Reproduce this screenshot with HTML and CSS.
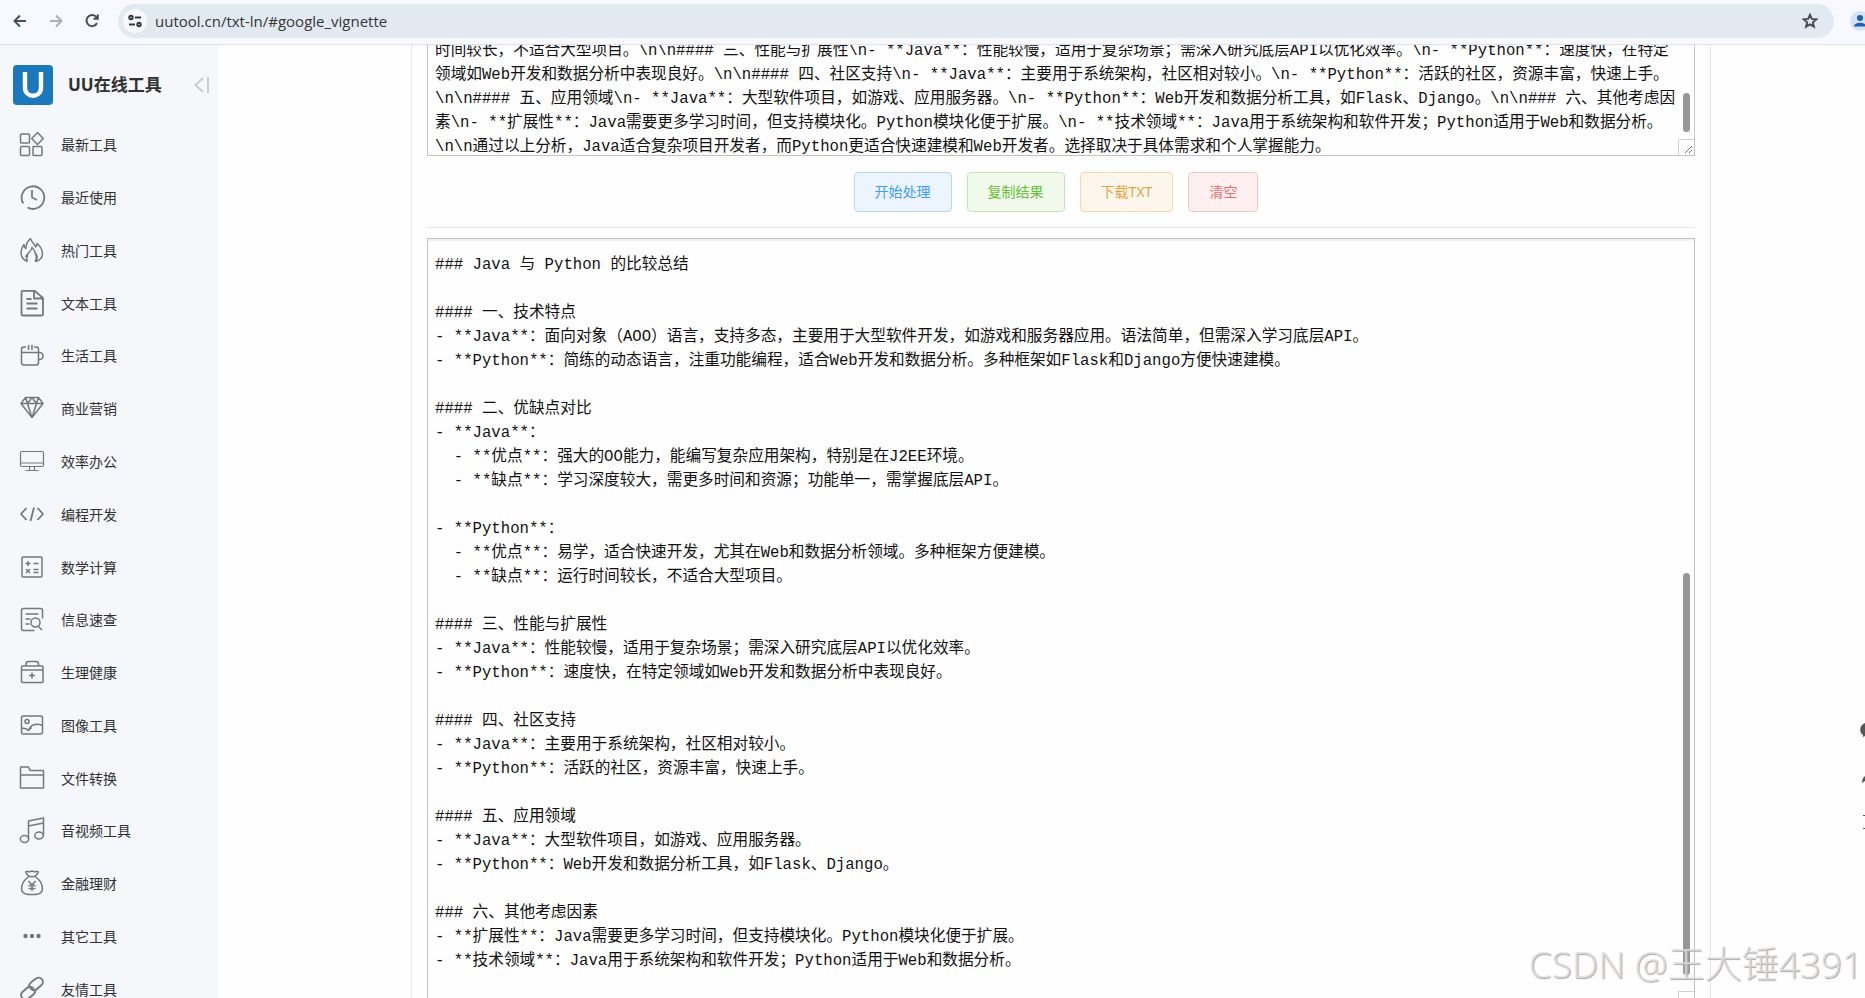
FILE: index.html
```html
<!DOCTYPE html>
<html lang="zh-CN">
<head>
<meta charset="utf-8">
<title>UU在线工具</title>
<link rel="stylesheet" href="styles.css">
</head>
<body>
<header class="browser">
  <button class="nav-btn" aria-label="后退"><svg width="16" height="16" viewBox="0 0 16 16"><path d="M14 8H3M8 2.500L2.500 8L8 13.500"/></svg></button>
  <button class="nav-btn dim" aria-label="前进"><svg width="16" height="16" viewBox="0 0 16 16"><path d="M2 8h11M8 2.500L13.500 8L8 13.500"/></svg></button>
  <button class="nav-btn" aria-label="刷新"><svg width="16" height="16" viewBox="0 0 16 16"><path d="M13 10a5.500 5.500 0 1 1-1-6.200L13.500 5.300M13.800 1.500v4.300h-4.300"/></svg></button>
  <div class="address">
    <button class="site-info" aria-label="网站信息"><svg width="14" height="14" viewBox="0 0 14 14"><circle cx="3" cy="3.500" r="1.700"/><path d="M7 3.500h6M1 10.500h6"/><circle cx="11" cy="10.500" r="1.700"/></svg></button>
    <input class="url" type="text" aria-label="网址" value="uutool.cn/txt-ln/#google_vignette">
    <button class="star" aria-label="收藏"><svg width="16" height="16" viewBox="0 0 16 16"><path d="M8 1.800l1.800 4.100 4.500.4-3.400 3 1 4.400L8 11.400l-3.900 2.300 1-4.400-3.400-3 4.500-.4z"/></svg></button>
  </div>
  <button class="profile" aria-label="个人资料"><svg width="20" height="20" viewBox="0 0 20 20"><circle cx="10" cy="10" r="10" fill="#d3e3f8"/><circle cx="10" cy="7" r="3" fill="#1f5fb5"/><path d="M4 15.500c0-5 12-5 12 0z" fill="#1f5fb5"/></svg></button>
</header>
<div class="page">
  <aside class="sidebar">
    <div class="brand">
      <svg class="logo" width="40" height="40" viewBox="0 0 40 40"><rect width="40" height="40" rx="4" fill="#1b78bc"/><path d="M12 7v15.500c0 11 16 11 16 0V7" fill="none" stroke="#fff" stroke-width="4.400"/></svg>
      <strong class="brand-name">UU在线工具</strong>
      <button class="collapse" aria-label="收起"><svg width="16" height="18" viewBox="0 0 16 18"><path d="M9 2L1.500 9L9 16M14 1v16"/></svg></button>
    </div>
    <nav class="menu">
      <a href="#new"><svg viewBox="0 0 28 28"><rect x="2.500" y="4" width="9" height="9" rx="1"/><rect x="2.500" y="16.500" width="9" height="9" rx="1"/><rect x="15" y="16.500" width="9" height="9" rx="1"/><path d="M19.500 2.500l5.800 6-5.800 6-5.800-6z"/></svg>最新工具</a>
      <a href="#recent"><svg viewBox="0 0 28 28"><path d="M5.300 20.500A11.300 11.300 0 1 1 9.500 24.500M14 7v7.500l5 2.500" stroke-width="1.800"/></svg>最近使用</a>
      <a href="#hot"><svg viewBox="0 0 28 28"><path d="M9.500 25.500C1 22 2 14 6 8.500c0 2.500.5 3.500 2 4C8 8 9.500 5 12.500 2.500c.5 3.500 4.500 5 5 8.500 1-.5 1.500-2 1.500-3.500 7 6 8 15-1 18 2-4 1.500-6-.5-8-.5-2.500-1.500-4-3.500-6-.5 4-6 7-6.500 9.500"/><path d="M9.500 25c-1.500-2.500-1-4 .5-6M17 17c2 3 2 5.500 0 8.500"/></svg>热门工具</a>
      <a href="#text"><svg viewBox="0 0 28 28"><path d="M4.500 1.800h12L25 9v15.700q0 1.800-1.800 1.800H5.300q-1.800 0-1.800-1.800V3.300q0-1.500 1-1.500zM16 2v7.500h9M8.500 10h5M8.500 14.500h11M8.500 19.500h11" stroke-width="1.800"/></svg>文本工具</a>
      <a href="#life"><svg viewBox="0 0 28 28"><path d="M8 6H6Q3.500 6 3.500 8.500v13Q3.500 24 6 24h12q2.500 0 2.500-2.500v-13Q20.500 6 18 6h-2M3.500 11.500h17M10.500 4v5M14 4v5M20.500 11.500c6-1 6 8 0 7"/></svg>生活工具</a>
      <a href="#biz"><svg viewBox="0 0 28 28"><path d="M7.500 3.500h13l4.500 6L14 23.500 3 9.500zM3 9.500h22M7.500 3.500l2 6 4.500-6 4.500 6 2-6M9.500 9.500L14 23.500l4.500-14"/></svg>商业营销</a>
      <a href="#office"><svg viewBox="0 0 28 28"><path d="M4 4.500h20q1.500 0 1.500 1.500v12q0 1.500-1.500 1.500H4q-1.500 0-1.500-1.500V6Q2.500 4.500 4 4.500zM2.500 16h23M11.500 19.500v3.500M16.500 19.500v3.500M7.500 23.500h13" stroke-width="1.200"/></svg>效率办公</a>
      <a href="#dev"><svg viewBox="0 0 28 28"><path d="M8.500 8L3 14l5.500 6M19.500 8l5.500 6-5.500 6M16 7.500L12.500 21" stroke-width="1.800"/></svg>编程开发</a>
      <a href="#math"><svg viewBox="0 0 28 28"><rect x="4" y="4" width="20" height="20" rx="1"/><path d="M7.500 10.500h5M10 8v5M15.500 10.500h5M8 16l4 4M12 16l-4 4M15.500 16.500h5M15.500 19.500h5"/></svg>数学计算</a>
      <a href="#info"><svg viewBox="0 0 28 28"><path d="M16.500 25.500h-11q-2 0-2-2v-18q0-2 2-2h17q2 0 2 2v8M7.500 9h13M7.500 14h5M7.500 19h4M20.500 21.500l3.500 3.500"/><circle cx="17.500" cy="17.500" r="4.500"/></svg>信息速查</a>
      <a href="#health"><svg viewBox="0 0 28 28"><rect x="3.500" y="8" width="21.500" height="16.500" rx="1"/><path d="M3.500 12h21.500M8 8V6q0-2.500 2.500-2.500h7.500Q20.500 3.500 20.500 6v2M14 14.500v6M11 17.500h6" stroke-width="1.600"/></svg>生理健康</a>
      <a href="#image"><svg viewBox="0 0 28 28"><rect x="3.500" y="5" width="21" height="18" rx="2"/><circle cx="9" cy="10.500" r="2"/><path d="M3.500 17.500c3-.5 5.500.5 7 2 2-6 7.500-7.500 14-5M10.500 19.500l3-3"/></svg>图像工具</a>
      <a href="#file"><svg viewBox="0 0 28 28"><path d="M3 24q-.5 0-.5-.5v-20Q2.500 3 3 3h7.500l1.500 3.500h13q.5 0 .5.500v16.500q0 .5-.5.500zM2.500 11h23"/></svg>文件转换</a>
      <a href="#av"><svg viewBox="0 0 28 28"><ellipse cx="6.500" cy="23" rx="4.200" ry="3.500"/><ellipse cx="21" cy="19.500" rx="4.200" ry="3.500"/><path d="M10.500 23V5L25.500 2v17.500M10.500 10l15-3"/></svg>音视频工具</a>
      <a href="#finance"><svg viewBox="0 0 28 28"><path d="M11 7.500C1.500 14 1 25.500 10 25.500h8c9 0 8.500-11.500-1-18zM11 7.500L8 4q-1-2 1.500-1.500 2 .5 3 0 1.500-.8 3 0 1 .5 3 0Q21 2 20 4l-3 3.500M10.500 12l3.500 4 3.500-4M14 16v6M10.500 16.500h7M10.500 19.500h7"/></svg>金融理财</a>
      <a href="#other"><svg viewBox="0 0 28 28"><g fill="#777" stroke="none"><circle cx="7.500" cy="14" r="2.200"/><circle cx="14" cy="14" r="2.200"/><circle cx="20.500" cy="14" r="2.200"/></g></svg>其它工具</a>
      <a href="#links"><svg viewBox="0 0 28 28"><path d="M11 13c-2-4 4-7 7-9.500 5-3 9 3 5.500 6.500l-5 4.500c-3 2-6 0-6-2M17 14c2 4-3 7-7 9.500-5 3-9-3-5.500-6.500l5-4.500c3-2 6 0 6 2" stroke-width="1.800"/></svg>友情工具</a>
    </nav>
  </aside>
  <main class="main">
    <section class="panel">
      <div class="field source">
        <textarea class="code" aria-label="输入文本" spellcheck="false">
时间较长，不适合大型项目。\n\n#### 三、性能与扩展性\n- **Java**：性能较慢，适用于复杂场景；需深入研究底层API以优化效率。\n- **Python**：速度快，在特定
领域如Web开发和数据分析中表现良好。\n\n#### 四、社区支持\n- **Java**：主要用于系统架构，社区相对较小。\n- **Python**：活跃的社区，资源丰富，快速上手。
\n\n#### 五、应用领域\n- **Java**：大型软件项目，如游戏、应用服务器。\n- **Python**：Web开发和数据分析工具，如Flask、Django。\n\n### 六、其他考虑因
素\n- **扩展性**：Java需要更多学习时间，但支持模块化。Python模块化便于扩展。\n- **技术领域**：Java用于系统架构和软件开发；Python适用于Web和数据分析。
\n\n通过以上分析，Java适合复杂项目开发者，而Python更适合快速建模和Web开发者。选择取决于具体需求和个人掌握能力。</textarea>
        <span class="thumb"></span>
        <svg class="grip" width="16" height="16" viewBox="0 0 16 16"><path class="edge" d="M.5 16V.5H16"/><path d="M7 14l7-7M11 14l3-3"/></svg>
      </div>
      <div class="actions">
        <button class="btn blue">开始处理</button>
        <button class="btn green">复制结果</button>
        <button class="btn orange">下载TXT</button>
        <button class="btn red">清空</button>
      </div>
      <hr class="rule">
      <div class="field result">
        <textarea class="code" aria-label="处理结果" spellcheck="false">
### Java 与 Python 的比较总结

#### 一、技术特点
- **Java**：面向对象（AOO）语言，支持多态，主要用于大型软件开发，如游戏和服务器应用。语法简单，但需深入学习底层API。
- **Python**：简练的动态语言，注重功能编程，适合Web开发和数据分析。多种框架如Flask和Django方便快速建模。

#### 二、优缺点对比
- **Java**：
  - **优点**：强大的OO能力，能编写复杂应用架构，特别是在J2EE环境。
  - **缺点**：学习深度较大，需更多时间和资源；功能单一，需掌握底层API。

- **Python**：
  - **优点**：易学，适合快速开发，尤其在Web和数据分析领域。多种框架方便建模。
  - **缺点**：运行时间较长，不适合大型项目。

#### 三、性能与扩展性
- **Java**：性能较慢，适用于复杂场景；需深入研究底层API以优化效率。
- **Python**：速度快，在特定领域如Web开发和数据分析中表现良好。

#### 四、社区支持
- **Java**：主要用于系统架构，社区相对较小。
- **Python**：活跃的社区，资源丰富，快速上手。

#### 五、应用领域
- **Java**：大型软件项目，如游戏、应用服务器。
- **Python**：Web开发和数据分析工具，如Flask、Django。

### 六、其他考虑因素
- **扩展性**：Java需要更多学习时间，但支持模块化。Python模块化便于扩展。
- **技术领域**：Java用于系统架构和软件开发；Python适用于Web和数据分析。
</textarea>
        <span class="thumb"></span>
        <svg class="grip" width="16" height="16" viewBox="0 0 16 16"><path class="edge" d="M.5 16V.5H16"/><path d="M7 14l7-7M11 14l3-3"/></svg>
      </div>
    </section>
  </main>
</div>
<svg class="float-tools" width="6" height="112" viewBox="0 0 6 112"><path d="M6 1C0 3 0 11 4 13v2l2-1zM6 54q-3 2-3 7l3-2zM4 93h2v1H4zM4 106h2v1H4z" fill="#555"/></svg>
<div class="watermark">CSDN @王大锤4391</div>
</body>
</html>
```
FILE: styles.css
```css
* { box-sizing: border-box; }
body {
  margin: 0;
  height: 100vh;
  display: flex;
  flex-direction: column;
  overflow: hidden;
  background: #fefefe;
  color: #333;
  font: 14px/20px "Noto Sans", "Noto Sans CJK SC", sans-serif;
}
button { font: inherit; cursor: pointer; }
svg { fill: none; flex: none; display: block; }

.browser {
  display: flex;
  align-items: center;
  height: 45px;
  padding: 0 0 3px 12px;
  background: #f8f9fe;
  border-bottom: 1px solid #dde1ea;
  overflow: hidden;
}
.nav-btn, .site-info, .star, .profile, .collapse {
  border: 0;
  padding: 0;
  background: none;
}
.nav-btn { width: 16px; margin-right: 20px; flex: none; }
.nav-btn svg { stroke: #46505c; stroke-width: 2; }
.nav-btn.dim svg { stroke: #a9adb5; }
.address {
  flex: 1;
  display: flex;
  align-items: center;
  height: 34px;
  margin: 0 16px 0 -2px;
  padding: 0 16px 0 5px;
  border-radius: 17px;
  background: #e3e9f1;
}
.site-info {
  display: grid;
  place-items: center;
  width: 24px;
  height: 24px;
  border-radius: 12px;
  background: #f8f9fe;
}
.site-info svg { stroke: #33383f; stroke-width: 2; }
.url {
  flex: 1;
  border: 0;
  outline: 0;
  padding: 0 8px;
  background: none;
  color: #33373c;
  font: 15px/20px "Open Sans", sans-serif;
}
.star svg { stroke: #46505c; stroke-width: 2; }
.profile { width: 20px; margin-right: -5px; flex: none; }

.page { flex: 1; display: flex; min-height: 0; }

.sidebar {
  width: 218px;
  flex: none;
  display: flex;
  flex-direction: column;
  background: #f5f7fb;
}
.brand { display: flex; align-items: center; height: 74px; padding: 6px 8px 0 13px; }
.brand-name { flex: 1; margin-left: 15px; font-size: 17px; line-height: 24px; color: #303133; }
.collapse svg { stroke: #ccc; stroke-width: 2; }
.menu { flex: 1; display: flex; flex-direction: column; margin-bottom: -18px; }
.menu a {
  flex: 1;
  display: flex;
  align-items: center;
  gap: 15px;
  padding-left: 18px;
  color: #303133;
  text-decoration: none;
}
.menu svg {
  width: 28px;
  height: 28px;
  margin-bottom: 2px;
  stroke: #777;
  stroke-width: 1.5;
  stroke-linejoin: round;
}

.main { flex: 1; min-width: 0; padding: 0 154px 0 193px; overflow: hidden; }
.panel {
  height: 100%;
  padding: 0 15px;
  border: solid #e6e6e6;
  border-width: 0 1px;
  overflow: hidden;
}
.field { position: relative; }
.code {
  display: block;
  width: 100%;
  margin: 0;
  padding: 0 16px 0 7px;
  border: 1px solid #c4c4c4;
  border-radius: 0;
  outline: 0;
  resize: none;
  overflow: hidden;
  white-space: pre;
  background: #fefefe;
  color: #111;
  font: 16px/24px "Liberation Mono", "Noto Sans CJK SC", monospace;
  font-size-adjust: ch-width 0.588;
}
.source { margin-top: -7px; }
.source .code { height: 118px; }
.thumb {
  position: absolute;
  right: 5px;
  width: 7px;
  border-radius: 4px;
  background: #979797;
}
.source .thumb { top: 55px; height: 39px; }
.grip { position: absolute; right: 1px; stroke: #777; stroke-width: 1; }
.grip .edge { stroke: #d0d0d0; }
.source .grip { bottom: 1px; }

.actions {
  display: flex;
  justify-content: center;
  gap: 15px;
  padding: 16px 10px 15px 0;
}
.btn { height: 40px; padding: 0 20px; border: 1px solid; border-radius: 4px; }
.blue { color: #409eff; background: #ecf5ff; border-color: #b3d8ff; }
.green { color: #67c23a; background: #f0f9eb; border-color: #c2e7b0; }
.orange { color: #e6a23c; background: #fdf6ec; border-color: #f5dab1; }
.red { color: #f56c6c; background: #fef0f0; border-color: #fbc4c4; }
.rule { margin: 0 0 10px; border: 0; border-top: 1px solid #e8e8e8; }

.result .code { height: 770px; padding-top: 14px; box-shadow: inset 0 2px 2px #eee; }
.result .thumb { top: 335px; height: 402px; }
.result .grip { top: 753px; }

.float-tools { position: absolute; right: 0; top: 722px; }
.watermark {
  position: absolute;
  right: 2px;
  bottom: 10px;
  color: rgba(225, 225, 225, .8);
  font: 300 37px/48px "Noto Sans", "Noto Sans CJK SC", sans-serif;
  text-shadow: 1px 1px 1px #aaa;
  pointer-events: none;
}
```
